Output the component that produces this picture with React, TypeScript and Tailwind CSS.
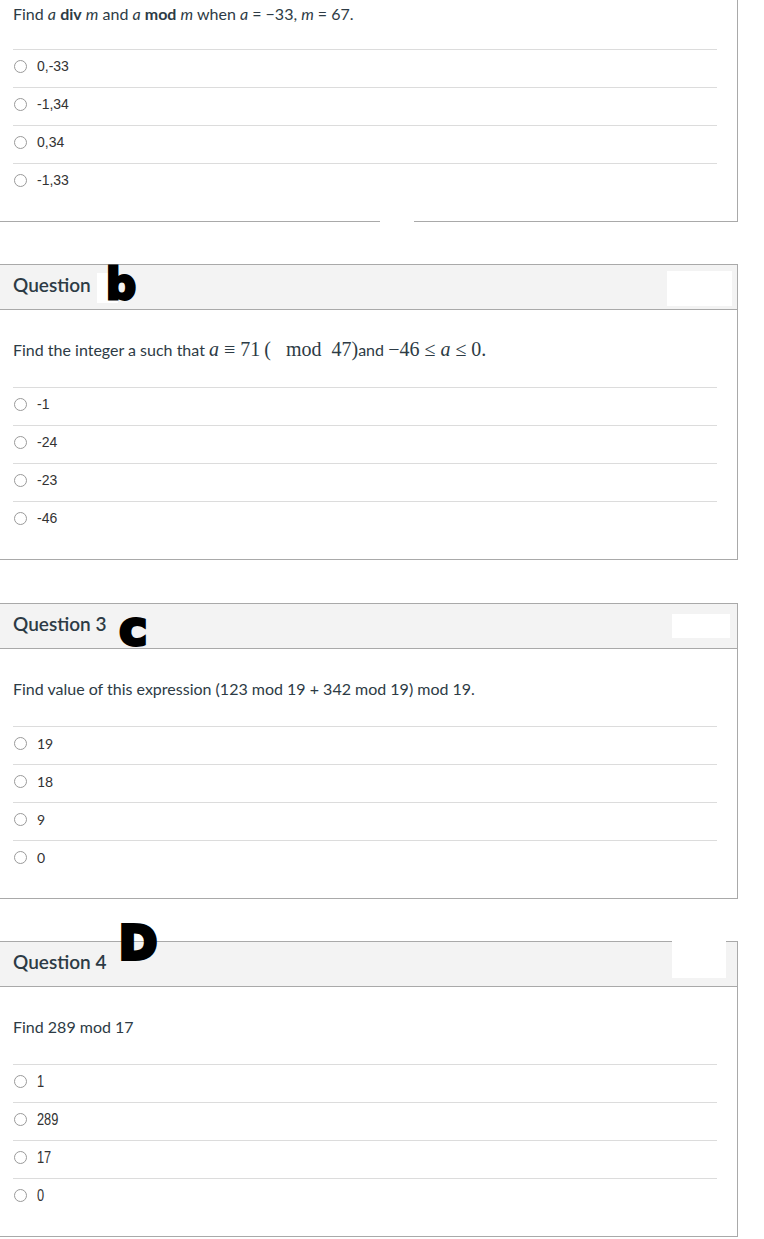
import React from "react";

type Answer = { label: string };

const lato = "font-['Lato','Noto_Sans',sans-serif]";

function Radio() {
  return (
    <span className="inline-block h-[13px] w-[13px] shrink-0 rounded-full border border-[#9a9a9a] bg-white" />
  );
}

function Answers({ items, font }: { items: Answer[]; font: string }) {
  return (
    <div className="ml-[13px] mr-[20px]">
      {items.map((a, i) => (
        <div
          key={i}
          className="flex h-[38px] items-center border-t border-[#dcdcdc] pb-[4px] pl-[1px]"
        >
          <Radio />
          <span className={`ml-[10px] text-[#333] ${font}`}>{a.label}</span>
        </div>
      ))}
    </div>
  );
}

function Header({
  title,
  children,
}: {
  title: string;
  children?: React.ReactNode;
}) {
  return (
    <div className="relative flex h-[46px] items-center border-y border-[#a9a9a9] bg-[#f3f3f3] pb-[3px] pl-[13px]">
      <h2 className={`text-[19px] font-semibold text-[#2d3b45] ${lato}`}>
        {title}
      </h2>
      {children}
    </div>
  );
}

const Mi = ({ children }: { children: React.ReactNode }) => (
  <span className="italic font-['Liberation_Serif',serif]">{children}</span>
);

const arial = "text-[14px] font-['Liberation_Sans',Arial,sans-serif]";

export default function App() {
  return (
    <div className={`w-[764px] bg-white pb-[2px] ${lato}`}>
      {/* question 1, cut off at the top */}
      <div className="relative w-[738px] border-r border-b border-[#a9a9a9]">
        <p className="pl-[13px] pt-[3px] text-[16px] leading-[22px] text-[#2d3b45]">
          Find <i>a</i> <b>div</b> <i>m</i> and <i>a</i> <b>mod</b> <i>m</i>{" "}
          when <i>a</i> = −33, <i>m</i> = 67.
        </p>
        <div className="mt-[24px] pb-[20px]">
          <Answers
            font={arial}
            items={[
              { label: "0,-33" },
              { label: "-1,34" },
              { label: "0,34" },
              { label: "-1,33" },
            ]}
          />
        </div>
        <div className="absolute bottom-[-1px] left-[380px] h-[1px] w-[34px] bg-white" />
      </div>

      {/* question 2 */}
      <div className="mt-[42px] w-[738px] border-r border-b border-[#a9a9a9]">
        <Header title="Question">
          <div className="absolute left-[97px] top-[8px] h-[30px] w-[21px] bg-white" />
          <span className="absolute left-[106px] top-[-1px] font-['DejaVu_Sans',sans-serif] text-[42px] font-bold leading-none text-black [-webkit-text-stroke:3px_black]">
            b
          </span>
          <div className="absolute left-[667px] top-[6px] h-[35px] w-[65px] bg-white" />
        </Header>
        <p className="h-[51px] pl-[13px] pt-[29px] text-[16px] leading-[22px] text-[#2d3b45]">
          Find the integer a such that{" "}
          <span className="font-['Liberation_Serif',serif] text-[20px] leading-none">
            <Mi>a</Mi>&nbsp;≡&nbsp;71&thinsp;(&nbsp;&nbsp;&nbsp;mod&nbsp;&nbsp;47)
          </span>
          and{" "}
          <span className="font-['Liberation_Serif',serif] text-[20px] leading-none">
            −46&nbsp;≤&nbsp;<Mi>a</Mi>&nbsp;≤&nbsp;0.
          </span>
        </p>
        <div className="mt-[26px] pb-[20px]">
          <Answers
            font={arial}
            items={[
              { label: "-1" },
              { label: "-24" },
              { label: "-23" },
              { label: "-46" },
            ]}
          />
        </div>
      </div>

      {/* question 3 */}
      <div className="mt-[43px] w-[738px] border-r border-b border-[#a9a9a9]">
        <Header title="Question 3">
          <span className="absolute left-[119px] top-[0px] font-['DejaVu_Sans',sans-serif] text-[48px] font-bold leading-none text-black [-webkit-text-stroke:3px_black]">
            c
          </span>
          <div className="absolute left-[672px] top-[10px] h-[24px] w-[58px] bg-white" />
        </Header>
        <p className="pl-[13px] pt-[29px] text-[16px] leading-[22px] text-[#2d3b45]">
          Find value of this expression (123 mod 19 + 342 mod 19) mod 19.
        </p>
        <div className="mt-[26px] pb-[20px]">
          <Answers
            font={`text-[14px] ${lato}`}
            items={[
              { label: "19" },
              { label: "18" },
              { label: "9" },
              { label: "0" },
            ]}
          />
        </div>
      </div>

      {/* question 4 */}
      <div className="mt-[42px] w-[738px] border-r border-b border-[#a9a9a9]">
        <Header title="Question 4">
          <span className="absolute left-[119px] top-[-22px] font-['DejaVu_Sans',sans-serif] text-[46px] font-bold leading-none text-black [-webkit-text-stroke:4px_black]">
            D
          </span>
          <div className="absolute left-[672px] top-[-1px] h-[37px] w-[54px] bg-white" />
        </Header>
        <p className="pl-[13px] pt-[29px] text-[16px] leading-[22px] text-[#2d3b45]">
          Find 289 mod 17
        </p>
        <div className="mt-[26px] pb-[20px]">
          <Answers
            font="inline-block origin-left scale-x-[0.8] text-[16px] font-['Liberation_Sans',Arial,sans-serif]"
            items={[
              { label: "1" },
              { label: "289" },
              { label: "17" },
              { label: "0" },
            ]}
          />
        </div>
      </div>
    </div>
  );
}
